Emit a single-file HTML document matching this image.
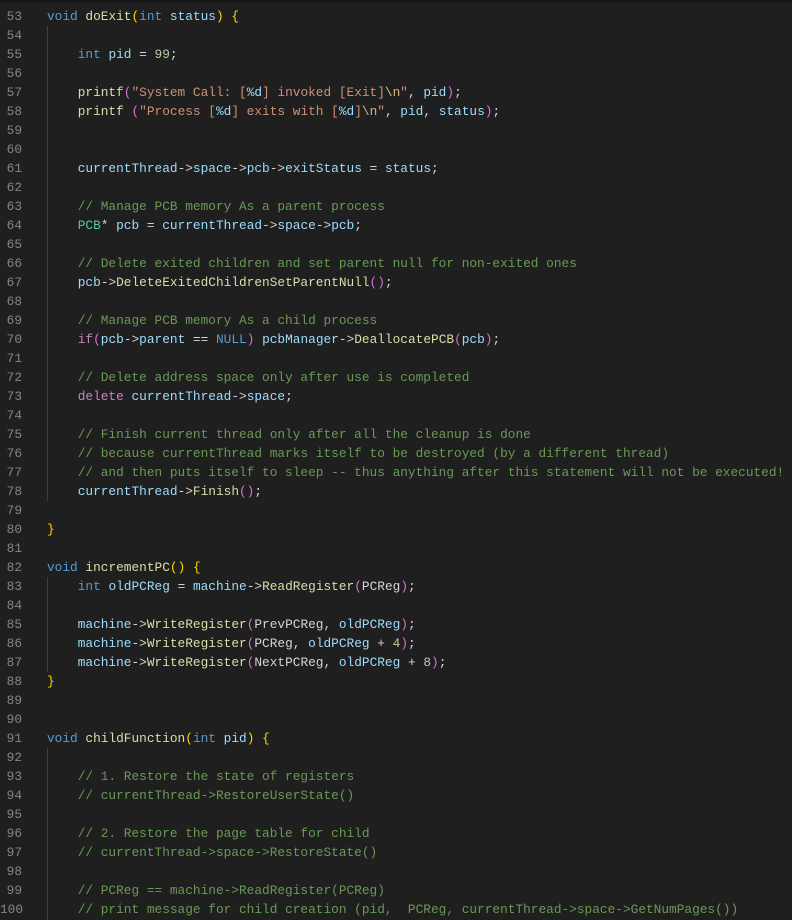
<!DOCTYPE html>
<html><head><meta charset="utf-8"><style>
html,body{margin:0;padding:0;background:#1f1f1f;width:792px;height:920px;overflow:hidden}
body{font-family:"Liberation Mono",monospace;font-size:12.8px;color:#d4d4d4;position:relative}
.top{position:absolute;left:0;top:0;width:792px;height:3px;background:#181818}
.ln{position:absolute;left:0;width:22px;text-align:right;color:#858585}
.l{position:absolute;left:47px;white-space:pre}
.g{position:absolute;left:47px;width:1px;background:#404040}
.k{color:#569cd6}.f{color:#dcdcaa}.v{color:#9cdcfe}.s{color:#ce9178}.c{color:#6a9955}.n{color:#b5cea8}.t{color:#4ec9b0}.p{color:#c586c0}.e{color:#d7ba7d}
.b1{color:#ffd700}.b2{color:#da70d6}.b3{color:#179fff}
</style></head><body>
<div class="top"></div>
<div class="g" style="top:26px;height:475px"></div>
<div class="g" style="top:577px;height:95px"></div>
<div class="g" style="top:748px;height:172px"></div>
<div id="c"></div>
<script>
const L={
53:'<span class="k">void</span> <span class="f">doExit</span><span class="b1">(</span><span class="k">int</span> <span class="v">status</span><span class="b1">)</span> <span class="b1">{</span>',
55:'    <span class="k">int</span> <span class="v">pid</span> = <span class="n">99</span>;',
57:'    <span class="f">printf</span><span class="b2">(</span><span class="s">"System Call: [</span><span class="v">%d</span><span class="s">] invoked [Exit]</span><span class="e">\\n</span><span class="s">"</span>, <span class="v">pid</span><span class="b2">)</span>;',
58:'    <span class="f">printf</span> <span class="b2">(</span><span class="s">"Process [</span><span class="v">%d</span><span class="s">] exits with [</span><span class="v">%d</span><span class="s">]</span><span class="e">\\n</span><span class="s">"</span>, <span class="v">pid</span>, <span class="v">status</span><span class="b2">)</span>;',
61:'    <span class="v">currentThread</span>-&gt;<span class="v">space</span>-&gt;<span class="v">pcb</span>-&gt;<span class="v">exitStatus</span> = <span class="v">status</span>;',
63:'    <span class="c">// Manage PCB memory As a parent process</span>',
64:'    <span class="t">PCB</span>* <span class="v">pcb</span> = <span class="v">currentThread</span>-&gt;<span class="v">space</span>-&gt;<span class="v">pcb</span>;',
66:'    <span class="c">// Delete exited children and set parent null for non-exited ones</span>',
67:'    <span class="v">pcb</span>-&gt;<span class="f">DeleteExitedChildrenSetParentNull</span><span class="b2">()</span>;',
69:'    <span class="c">// Manage PCB memory As a child process</span>',
70:'    <span class="p">if</span><span class="b2">(</span><span class="v">pcb</span>-&gt;<span class="v">parent</span> == <span class="k">NULL</span><span class="b2">)</span> <span class="v">pcbManager</span>-&gt;<span class="f">DeallocatePCB</span><span class="b2">(</span><span class="v">pcb</span><span class="b2">)</span>;',
72:'    <span class="c">// Delete address space only after use is completed</span>',
73:'    <span class="p">delete</span> <span class="v">currentThread</span>-&gt;<span class="v">space</span>;',
75:'    <span class="c">// Finish current thread only after all the cleanup is done</span>',
76:'    <span class="c">// because currentThread marks itself to be destroyed (by a different thread)</span>',
77:'    <span class="c">// and then puts itself to sleep -- thus anything after this statement will not be executed!</span>',
78:'    <span class="v">currentThread</span>-&gt;<span class="f">Finish</span><span class="b2">()</span>;',
80:'<span class="b1">}</span>',
82:'<span class="k">void</span> <span class="f">incrementPC</span><span class="b1">()</span> <span class="b1">{</span>',
83:'    <span class="k">int</span> <span class="v">oldPCReg</span> = <span class="v">machine</span>-&gt;<span class="f">ReadRegister</span><span class="b2">(</span>PCReg<span class="b2">)</span>;',
85:'    <span class="v">machine</span>-&gt;<span class="f">WriteRegister</span><span class="b2">(</span>PrevPCReg, <span class="v">oldPCReg</span><span class="b2">)</span>;',
86:'    <span class="v">machine</span>-&gt;<span class="f">WriteRegister</span><span class="b2">(</span>PCReg, <span class="v">oldPCReg</span> + <span class="n">4</span><span class="b2">)</span>;',
87:'    <span class="v">machine</span>-&gt;<span class="f">WriteRegister</span><span class="b2">(</span>NextPCReg, <span class="v">oldPCReg</span> + <span class="n">8</span><span class="b2">)</span>;',
88:'<span class="b1">}</span>',
91:'<span class="k">void</span> <span class="f">childFunction</span><span class="b1">(</span><span class="k">int</span> <span class="v">pid</span><span class="b1">)</span> <span class="b1">{</span>',
93:'    <span class="c">// 1. Restore the state of registers</span>',
94:'    <span class="c">// currentThread-&gt;RestoreUserState()</span>',
96:'    <span class="c">// 2. Restore the page table for child</span>',
97:'    <span class="c">// currentThread-&gt;space-&gt;RestoreState()</span>',
99:'    <span class="c">// PCReg == machine-&gt;ReadRegister(PCReg)</span>',
100:'    <span class="c">// print message for child creation (pid,  PCReg, currentThread-&gt;space-&gt;GetNumPages())</span>'
};
let h='';
for(let i=53;i<=100;i++){const y=7+(i-53)*19;
h+='<div class="ln" style="top:'+y+'px;line-height:19px">'+i+'</div>';
if(L[i])h+='<div class="l" style="top:'+y+'px;line-height:19px">'+L[i]+'</div>';}
document.getElementById('c').innerHTML=h;
</script>
</body></html>
